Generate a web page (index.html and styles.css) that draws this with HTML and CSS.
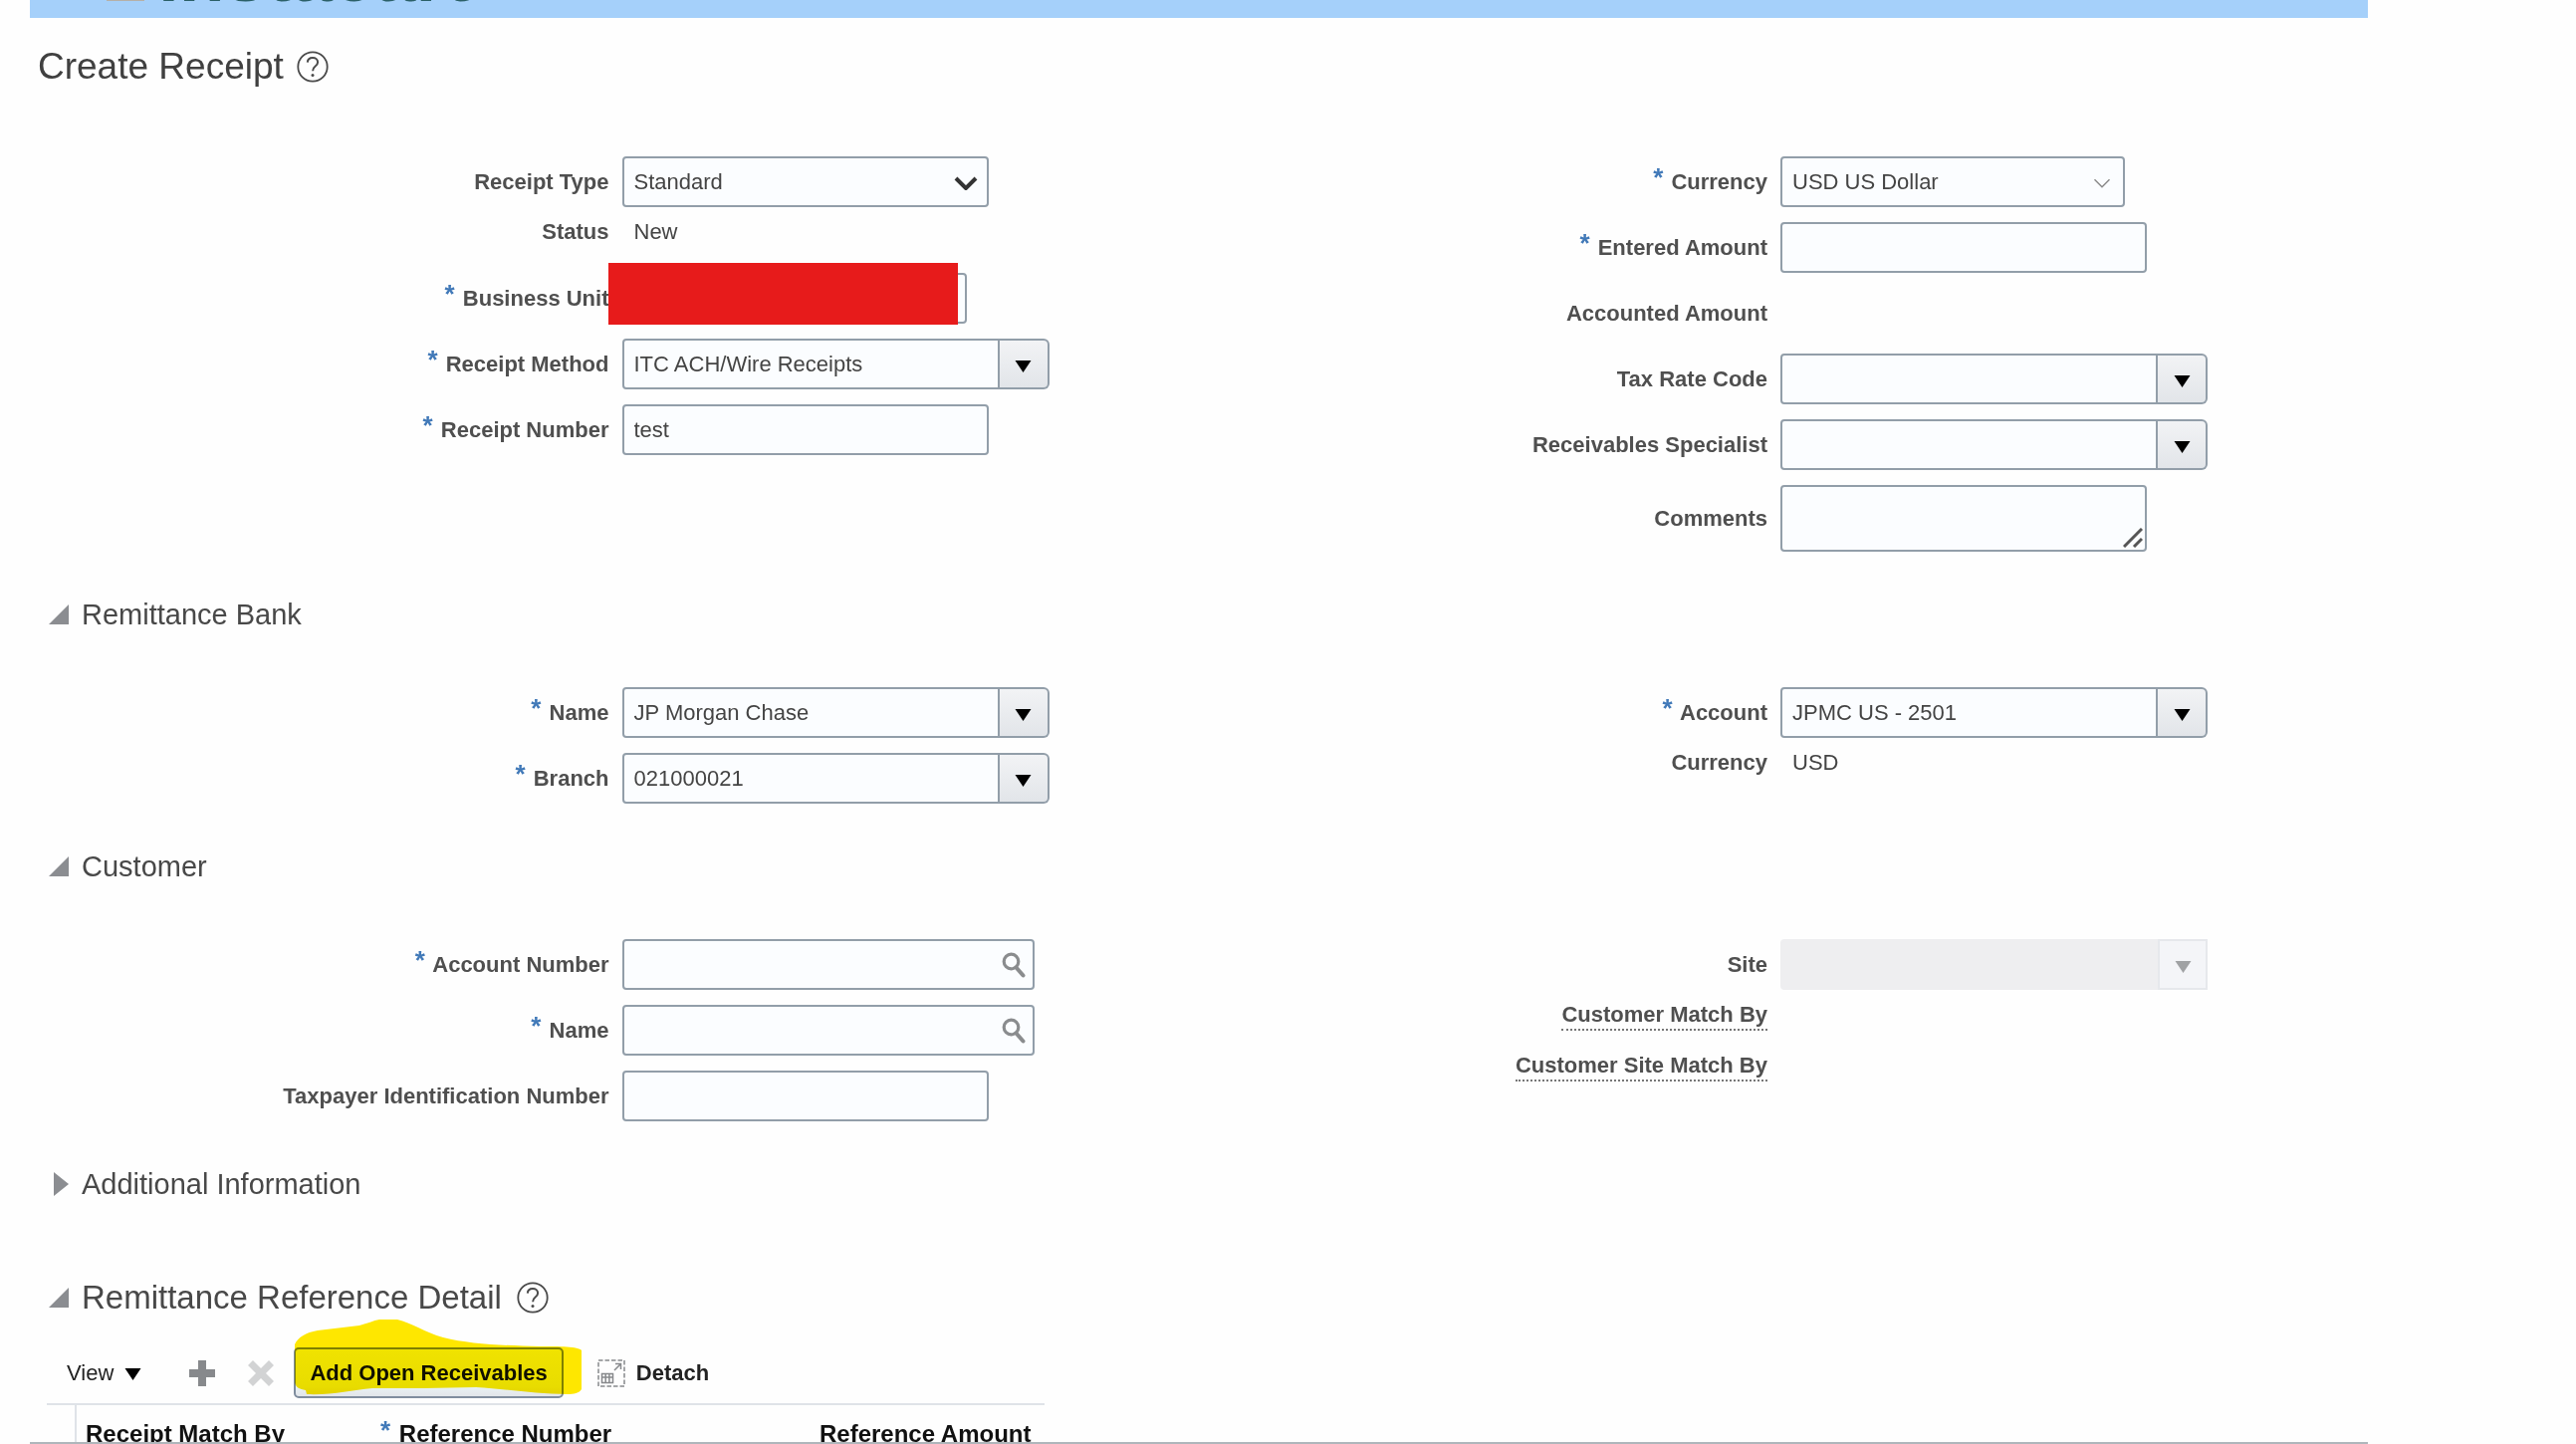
FILE: index.html
```html
<!DOCTYPE html>
<html lang="en">
  <head>
    <meta charset="UTF-8" />
    <meta name="viewport" content="width=device-width, initial-scale=1.0" />
    <title>Create Receipt</title>
    <link rel="stylesheet" href="styles.css">
  </head>
  <body>
    <!-- shared icons -->
    <svg class="sprite" aria-hidden="true">
      <symbol id="help" viewBox="0 0 32 32">
        <circle cx="16" cy="16" r="14.7" fill="none" stroke="#4a4a4a" stroke-width="1.8" />
        <path d="M10.8 11.6c.2-3 2.300-4.600 5.200-4.600s5.100 1.800 5.100 4.400c0 2-1 3.100-2.700 4.300-1.700 1.300-2.300 2.200-2.300 4.500" fill="none" stroke="#4a4a4a" stroke-width="2" />
        <circle cx="16" cy="24.500" r="1.500" fill="#4a4a4a" />
      </symbol>
      <symbol id="search" viewBox="0 0 24 26">
        <circle cx="9.500" cy="9.500" r="7.300" fill="none" stroke="currentColor" stroke-width="3.200" />
        <path d="M14.500 15.500l7 8" stroke="currentColor" stroke-width="4" stroke-linecap="round" />
      </symbol>
      <symbol id="down" viewBox="0 0 16 12">
        <path d="M0 0h16L8 12z" fill="currentColor" />
      </symbol>
    </svg>

    <div class="page">
      <header class="brand">
        <span class="brand-mark"></span>
        <span class="brand-name">instacart</span>
      </header>

      <main>
        <div class="title">
          <h1>Create Receipt</h1>
          <button class="icon-btn" aria-label="Help"><svg class="help"><use href="#help" /></svg></button>
        </div>

        <div class="form">
          <div class="column">
            <div class="row">
              <label for="receipt-type">Receipt Type</label>
              <div class="select">
                <select id="receipt-type"><option>Standard</option></select>
                <svg class="chevron" viewBox="0 0 24 14"><path d="M2 2l10 10L22 2" /></svg>
              </div>
            </div>
            <div class="row text-row">
              <span class="label">Status</span>
              <span class="value">New</span>
            </div>
            <div class="row">
              <label for="business-unit"><span class="req">*</span> Business Unit</label>
              <div class="redacted">
                <input type="text" id="business-unit" />
                <span class="redaction"></span>
              </div>
            </div>
            <div class="row">
              <label for="receipt-method"><span class="req">*</span> Receipt Method</label>
              <div class="combo">
                <input type="text" id="receipt-method" value="ITC ACH/Wire Receipts" />
                <button aria-label="Open Receipt Method"><svg class="down"><use href="#down" /></svg></button>
              </div>
            </div>
            <div class="row">
              <label for="receipt-number"><span class="req">*</span> Receipt Number</label>
              <input type="text" id="receipt-number" value="test" />
            </div>
          </div>

          <div class="column">
            <div class="row">
              <label for="currency"><span class="req">*</span> Currency</label>
              <div class="select narrow">
                <select id="currency"><option>USD US Dollar</option></select>
                <svg class="chevron thin" viewBox="0 0 24 14"><path d="M2 2l10 10L22 2" /></svg>
              </div>
            </div>
            <div class="row">
              <label for="entered-amount"><span class="req">*</span> Entered Amount</label>
              <input type="text" id="entered-amount" />
            </div>
            <div class="row">
              <span class="label">Accounted Amount</span>
            </div>
            <div class="row">
              <label for="tax-rate">Tax Rate Code</label>
              <div class="combo">
                <input type="text" id="tax-rate" />
                <button aria-label="Open Tax Rate Code"><svg class="down"><use href="#down" /></svg></button>
              </div>
            </div>
            <div class="row">
              <label for="specialist">Receivables Specialist</label>
              <div class="combo">
                <input type="text" id="specialist" />
                <button aria-label="Open Receivables Specialist"><svg class="down"><use href="#down" /></svg></button>
              </div>
            </div>
            <div class="row">
              <label for="comments">Comments</label>
              <div class="comments">
                <textarea id="comments"></textarea>
                <svg class="grip" viewBox="0 0 20 20"><path d="M1 19L19 1M11 19l8-8" /></svg>
              </div>
            </div>
          </div>
        </div>

        <section>
          <div class="heading">
            <button class="toggle" aria-label="Collapse Remittance Bank"><svg viewBox="0 0 20 20"><path d="M20 0v20H0z" /></svg></button>
            <h2>Remittance Bank</h2>
          </div>
          <div class="form">
            <div class="column">
              <div class="row">
                <label for="bank-name"><span class="req">*</span> Name</label>
                <div class="combo">
                  <input type="text" id="bank-name" value="JP Morgan Chase" />
                  <button aria-label="Open Name"><svg class="down"><use href="#down" /></svg></button>
                </div>
              </div>
              <div class="row">
                <label for="branch"><span class="req">*</span> Branch</label>
                <div class="combo">
                  <input type="text" id="branch" value="021000021" />
                  <button aria-label="Open Branch"><svg class="down"><use href="#down" /></svg></button>
                </div>
              </div>
            </div>
            <div class="column">
              <div class="row">
                <label for="account"><span class="req">*</span> Account</label>
                <div class="combo">
                  <input type="text" id="account" value="JPMC US - 2501" />
                  <button aria-label="Open Account"><svg class="down"><use href="#down" /></svg></button>
                </div>
              </div>
              <div class="row text-row">
                <span class="label">Currency</span>
                <span class="value">USD</span>
              </div>
            </div>
          </div>
        </section>

        <section>
          <div class="heading">
            <button class="toggle" aria-label="Collapse Customer"><svg viewBox="0 0 20 20"><path d="M20 0v20H0z" /></svg></button>
            <h2>Customer</h2>
          </div>
          <div class="form">
            <div class="column">
              <div class="row">
                <label for="account-number"><span class="req">*</span> Account Number</label>
                <div class="search">
                  <input type="text" id="account-number" />
                  <button class="icon-btn" aria-label="Search Account Number"><svg><use href="#search" /></svg></button>
                </div>
              </div>
              <div class="row">
                <label for="customer-name"><span class="req">*</span> Name</label>
                <div class="search">
                  <input type="text" id="customer-name" />
                  <button class="icon-btn" aria-label="Search Name"><svg><use href="#search" /></svg></button>
                </div>
              </div>
              <div class="row">
                <label for="taxpayer">Taxpayer Identification Number</label>
                <input type="text" id="taxpayer" />
              </div>
            </div>
            <div class="column">
              <div class="row">
                <label for="site">Site</label>
                <div class="combo disabled">
                  <input type="text" id="site" disabled />
                  <button aria-label="Open Site" disabled><svg class="down"><use href="#down" /></svg></button>
                </div>
              </div>
              <div class="row text-row">
                <span class="label hint">Customer Match By</span>
              </div>
              <div class="row text-row">
                <span class="label hint">Customer Site Match By</span>
              </div>
            </div>
          </div>
        </section>

        <section class="collapsed">
          <div class="heading">
            <button class="toggle" aria-label="Expand Additional Information"><svg viewBox="0 0 20 24"><path d="M5 0l15 12L5 24z" /></svg></button>
            <h2>Additional Information</h2>
          </div>
        </section>

        <section class="detail">
          <div class="heading">
            <button class="toggle" aria-label="Collapse Remittance Reference Detail"><svg viewBox="0 0 20 20"><path d="M20 0v20H0z" /></svg></button>
            <h2>Remittance Reference Detail</h2>
            <button class="icon-btn" aria-label="Help"><svg class="help"><use href="#help" /></svg></button>
          </div>

          <div class="toolbar">
            <button class="view">View <svg class="down"><use href="#down" /></svg></button>
            <button class="icon-btn add" aria-label="Add row"><svg viewBox="0 0 26 26"><path d="M13 0v26M0 13h26" /></svg></button>
            <button class="icon-btn remove" aria-label="Delete row" disabled><svg viewBox="0 0 26 26"><path d="M2.500 2.500l21 21M23.500 2.500l-21 21" /></svg></button>
            <div class="highlighted">
              <button class="primary">Add Open Receivables</button>
              <svg class="marker" viewBox="0 0 290 76">
                <path d="M1 32V25C4 18 12 13 24 11L66 6C74 4 80 1 86 0h18c14 3 28 13 46 18 28 7 60 8 98 9 18 0 38 0 41 4v39c-2 4-8 5-14 5-32 0-60-5-92-7-36 1-70 1-104 1-22 2-40 7-66 6l-1-4C6 70 1 68 1 62z" />
              </svg>
            </div>
            <button class="detach">
              <svg viewBox="0 0 28 28">
                <path d="M1 1h26v26H1z" stroke-width="1.500" stroke-dasharray="4.500 2" />
                <path d="M4.500 14.500h11v9h-11zM4.500 18h11M8.200 14.500v9M11.900 14.500v9" stroke-width="1.500" />
                <path d="M17 11l6-6M18 4.500h5.500V10" stroke-width="1.500" />
              </svg>
              Detach
            </button>
          </div>

          <table>
            <thead>
              <tr>
                <td class="handle"></td>
                <th class="match">Receipt Match By</th>
                <th class="number"><span class="req">*</span> Reference Number</th>
                <th class="amount">Reference Amount</th>
              </tr>
            </thead>
          </table>
        </section>
      </main>
    </div>
  </body>
</html>
```

FILE: styles.css
```css
* {
  margin: 0;
  padding: 0;
  box-sizing: border-box;
  font-family: "Liberation Sans", Arial, sans-serif;
}
body {
  background-color: #fefefe;
  color: #4f4f4f;
  font-size: 22px;
}
button,
input,
select,
textarea {
  font-size: 22px;
  color: #444;
}
button {
  cursor: pointer;
}
.sprite {
  position: absolute;
  width: 0;
  height: 0;
}
.page {
  height: 100vh;
  margin: 0 209px 0 30px;
  overflow: hidden;
  border-bottom: 2px solid #afb6bb;
}
.brand {
  display: flex;
  align-items: flex-end;
  gap: 14px;
  height: 18px;
  padding: 0 0 7px 77px;
  overflow: hidden;
  background-color: #a5d0fa;
}
.brand-mark {
  width: 38px;
  height: 12px;
  margin-bottom: 10px;
  background-color: #b5b0a8;
}
.brand-name {
  font-size: 75px;
  line-height: 72px;
  font-weight: bold;
  color: #2b6068;
}
.title {
  display: flex;
  align-items: center;
  gap: 13px;
  height: 40px;
  margin: 29px 0 70px 8px;
}
h1 {
  font-size: 37px;
  font-weight: normal;
  color: #404040;
}
h2 {
  font-size: 29px;
  font-weight: normal;
  color: #484848;
}
.icon-btn {
  display: flex;
  border: none;
  background: none;
}
.help {
  width: 32px;
  height: 32px;
}
.form {
  display: grid;
  grid-template-columns: 1fr 1fr;
  margin-left: 21px;
}
.column {
  display: flex;
  flex-direction: column;
  gap: 15px;
}
.row {
  display: grid;
  grid-template-columns: 19fr 20fr;
  column-gap: 13px;
  align-items: center;
  min-height: 51px;
}
.text-row {
  align-items: start;
  min-height: 36px;
  line-height: 20px;
}
label,
.label {
  justify-self: end;
  font-weight: bold;
  white-space: nowrap;
}
.req {
  margin-right: 2px;
  font-size: 26px;
  font-weight: bold;
  line-height: 0;
  vertical-align: 3px;
  color: #4179b8;
}
.value {
  padding-left: 12px;
  color: #444;
}
.hint {
  padding-bottom: 4px;
  border-bottom: 2px dotted #777;
}
input,
select,
textarea {
  display: block;
  width: 368px;
  height: 51px;
  padding: 0 10px;
  border: 2px solid #929ea9;
  border-radius: 4px;
  background-color: #fbfdff;
}
.select,
.comments,
.search,
.redacted {
  position: relative;
  width: 368px;
}
.select select {
  width: 100%;
  appearance: none;
}
.narrow {
  width: 346px;
}
.chevron {
  position: absolute;
  top: 20px;
  right: 11px;
  width: 24px;
  height: 14px;
  fill: none;
  stroke: #333;
  stroke-width: 4;
  pointer-events: none;
}
.chevron.thin {
  right: 14px;
  width: 18px;
  stroke: #8a8a8a;
  stroke-width: 2;
}
.redacted input {
  width: 346px;
}
.redaction {
  position: absolute;
  top: -10px;
  left: -14px;
  width: 351px;
  height: 62px;
  background-color: #e71b1b;
}
.combo {
  display: flex;
  width: 429px;
}
.combo input {
  flex: 1;
  width: 0;
  border-radius: 4px 0 0 4px;
}
.combo button {
  display: flex;
  align-items: center;
  justify-content: center;
  width: 50px;
  padding-top: 4px;
  border: 2px solid #929ea9;
  border-left: none;
  border-radius: 0 6px 6px 0;
  background: linear-gradient(#f2f3f5, #e2e5e9);
}
.down {
  width: 17px;
  height: 12px;
  color: #000;
}
.disabled input {
  border-color: #eeeef0;
  background-color: #eeeef0;
}
.disabled button {
  border: 2px solid #e6e8ec;
  border-radius: 0;
  background: #f4f5f8;
}
.disabled .down {
  color: #a0a2a4;
}
textarea {
  height: 67px;
  resize: none;
}
.grip {
  position: absolute;
  right: 4px;
  bottom: 4px;
  width: 20px;
  height: 20px;
  stroke: #555;
  stroke-width: 3;
}
.search,
.search input {
  width: 414px;
}
.search button {
  position: absolute;
  top: 13px;
  right: 9px;
  color: #8a8c8e;
}
.search svg {
  width: 24px;
  height: 26px;
}
section {
  margin-top: 43px;
}
.collapsed {
  margin-bottom: 74px;
}
.heading {
  display: flex;
  align-items: center;
  height: 40px;
  margin-left: 19px;
  margin-bottom: 53px;
}
.toggle {
  display: flex;
  margin-right: 13px;
  border: none;
  background: none;
}
.toggle svg {
  width: 20px;
  fill: #8b8d91;
}
.detail .heading {
  margin-bottom: 30px;
}
.collapsed .heading {
  margin-bottom: 0;
}
.detail {
  margin-top: 0;
}
.detail h2 {
  margin-right: 15px;
  font-size: 33px;
}
.toolbar {
  display: flex;
  align-items: center;
  height: 51px;
  margin-left: 37px;
}
.view {
  margin-right: 48px;
  border: none;
  background: none;
  color: #222;
}
.view .down {
  margin-left: 5px;
}
.add svg,
.remove svg {
  width: 26px;
  height: 26px;
}
.add {
  margin-right: 33px;
  stroke: #87898c;
  stroke-width: 8;
}
.remove {
  margin-right: 20px;
  stroke: #d2d3d4;
  stroke-width: 7;
}
.highlighted {
  position: relative;
  margin-right: 34px;
}
.primary {
  height: 51px;
  padding: 0 14px;
  border: 2px solid #7f8d9e;
  border-radius: 5px;
  background: linear-gradient(#f0fafa, #e8f2f4 80%, #e2e5ea);
  font-weight: bold;
  color: #111;
}
/* highlighter stroke over the button */
.marker {
  position: absolute;
  top: -28px;
  left: 0;
  width: 290px;
  height: 76px;
  fill: #ffe800;
  mix-blend-mode: multiply;
  pointer-events: none;
}
.detach {
  display: flex;
  align-items: center;
  gap: 11px;
  border: none;
  background: none;
  font-weight: bold;
  color: #222;
}
.detach svg {
  width: 28px;
  height: 28px;
  fill: none;
  stroke: #87898c;
}
table {
  width: 1002px;
  margin: 5px 0 0 17px;
  border-collapse: collapse;
  border-top: 2px solid #dfe3e8;
  table-layout: fixed;
}
th {
  height: 58px;
  text-align: left;
  font-size: 24px;
  color: #111;
}
.handle {
  width: 29px;
  border-right: 2px solid #dfe3e8;
}
.match {
  width: 306px;
  padding-left: 9px;
}
.amount {
  width: 226px;
}
```
